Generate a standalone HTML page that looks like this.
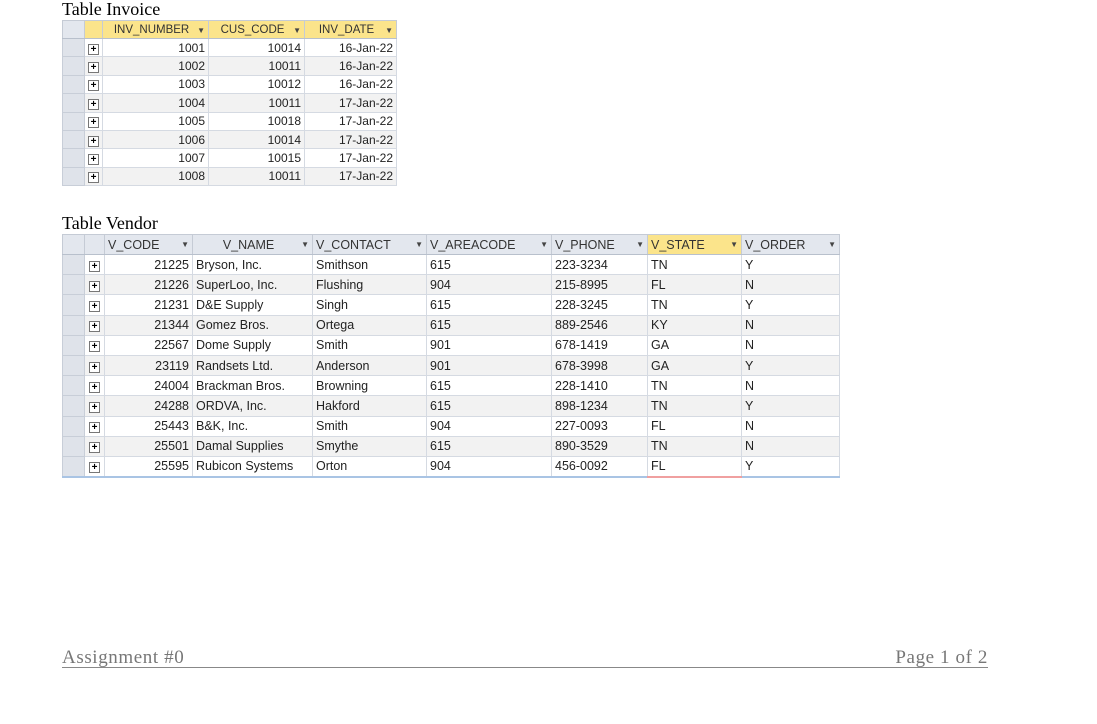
<!DOCTYPE html>
<html><head><meta charset="utf-8"><style>
body{margin:0;width:1097px;height:724px;background:#fff;position:relative;overflow:hidden;font-family:"Liberation Sans",sans-serif;}
.t{position:absolute;font-family:"Liberation Serif",serif;font-size:18px;color:#000;line-height:18px}
table{position:absolute;border-collapse:collapse;table-layout:fixed;font-size:12px;color:#222}
td{padding:0 3px;border:1px solid #d5dae2;white-space:nowrap;overflow:hidden}
tr.h td{background:#e3e7ee;border-color:#c5cbd5;color:#333;border-bottom:1px solid #b8c0cc}
tr.h td.y{background:#fbe48b}
td.s{background:#dfe3ea;border-color:#c8ced8;padding:0}
td.e{padding:0;text-align:center}
.p{display:inline-block;width:9px;height:9px;border:1px solid #777;background:#fff;font-size:10px;line-height:9px;text-align:center;color:#000;font-weight:bold}
tr.a td{background:#f2f2f2}
tr.a td.s{background:#dfe3ea}
.r{text-align:right}
.dd{float:right;font-size:8px;color:#444;margin-top:2px}
.ft{position:absolute;top:648px;font-family:"Liberation Serif",serif;font-size:19px;color:#777;line-height:20px}
</style></head><body>
<div class="t" style="left:62px;top:0">Table Invoice</div>
<table style="left:62px;top:20px;width:334px">
<col style="width:22px"><col style="width:18px"><col style="width:106px"><col style="width:96px"><col style="width:92px">
<tr class="h" style="height:18px;font-size:11.5px"><td class="s"></td><td class="y"></td><td class="y" style="text-align:center">INV_NUMBER <span class="dd">▼</span></td><td class="y" style="text-align:center">CUS_CODE <span class="dd">▼</span></td><td class="y" style="text-align:center">INV_DATE <span class="dd">▼</span></td></tr>
<tr style="height:18.4px"><td class="s"></td><td class="e"><span class="p">+</span></td><td class="r">1001</td><td class="r">10014</td><td class="r">16-Jan-22</td></tr>
<tr class="a" style="height:18.4px"><td class="s"></td><td class="e"><span class="p">+</span></td><td class="r">1002</td><td class="r">10011</td><td class="r">16-Jan-22</td></tr>
<tr style="height:18.4px"><td class="s"></td><td class="e"><span class="p">+</span></td><td class="r">1003</td><td class="r">10012</td><td class="r">16-Jan-22</td></tr>
<tr class="a" style="height:18.4px"><td class="s"></td><td class="e"><span class="p">+</span></td><td class="r">1004</td><td class="r">10011</td><td class="r">17-Jan-22</td></tr>
<tr style="height:18.4px"><td class="s"></td><td class="e"><span class="p">+</span></td><td class="r">1005</td><td class="r">10018</td><td class="r">17-Jan-22</td></tr>
<tr class="a" style="height:18.4px"><td class="s"></td><td class="e"><span class="p">+</span></td><td class="r">1006</td><td class="r">10014</td><td class="r">17-Jan-22</td></tr>
<tr style="height:18.4px"><td class="s"></td><td class="e"><span class="p">+</span></td><td class="r">1007</td><td class="r">10015</td><td class="r">17-Jan-22</td></tr>
<tr class="a" style="height:18.4px"><td class="s"></td><td class="e"><span class="p">+</span></td><td class="r">1008</td><td class="r">10011</td><td class="r">17-Jan-22</td></tr>
</table>

<div class="t" style="left:62px;top:214px">Table Vendor</div>
<table style="left:62px;top:234px;width:777px;font-size:12.5px">
<col style="width:22px"><col style="width:20px"><col style="width:88px"><col style="width:120px"><col style="width:114px"><col style="width:125px"><col style="width:96px"><col style="width:94px"><col style="width:98px">
<tr class="h" style="height:20px"><td class="s"></td><td></td><td>V_CODE <span class="dd">▼</span></td><td style="text-align:center">V_NAME <span class="dd">▼</span></td><td>V_CONTACT <span class="dd">▼</span></td><td>V_AREACODE <span class="dd">▼</span></td><td>V_PHONE <span class="dd">▼</span></td><td class="y">V_STATE <span class="dd">▼</span></td><td>V_ORDER <span class="dd">▼</span></td></tr>
<tr style="height:20.2px"><td class="s"></td><td class="e"><span class="p">+</span></td><td class="r">21225</td><td>Bryson, Inc.</td><td>Smithson</td><td>615</td><td>223-3234</td><td>TN</td><td>Y</td></tr>
<tr class="a" style="height:20.2px"><td class="s"></td><td class="e"><span class="p">+</span></td><td class="r">21226</td><td>SuperLoo, Inc.</td><td>Flushing</td><td>904</td><td>215-8995</td><td>FL</td><td>N</td></tr>
<tr style="height:20.2px"><td class="s"></td><td class="e"><span class="p">+</span></td><td class="r">21231</td><td>D&amp;E Supply</td><td>Singh</td><td>615</td><td>228-3245</td><td>TN</td><td>Y</td></tr>
<tr class="a" style="height:20.2px"><td class="s"></td><td class="e"><span class="p">+</span></td><td class="r">21344</td><td>Gomez Bros.</td><td>Ortega</td><td>615</td><td>889-2546</td><td>KY</td><td>N</td></tr>
<tr style="height:20.2px"><td class="s"></td><td class="e"><span class="p">+</span></td><td class="r">22567</td><td>Dome Supply</td><td>Smith</td><td>901</td><td>678-1419</td><td>GA</td><td>N</td></tr>
<tr class="a" style="height:20.2px"><td class="s"></td><td class="e"><span class="p">+</span></td><td class="r">23119</td><td>Randsets Ltd.</td><td>Anderson</td><td>901</td><td>678-3998</td><td>GA</td><td>Y</td></tr>
<tr style="height:20.2px"><td class="s"></td><td class="e"><span class="p">+</span></td><td class="r">24004</td><td>Brackman Bros.</td><td>Browning</td><td>615</td><td>228-1410</td><td>TN</td><td>N</td></tr>
<tr class="a" style="height:20.2px"><td class="s"></td><td class="e"><span class="p">+</span></td><td class="r">24288</td><td>ORDVA, Inc.</td><td>Hakford</td><td>615</td><td>898-1234</td><td>TN</td><td>Y</td></tr>
<tr style="height:20.2px"><td class="s"></td><td class="e"><span class="p">+</span></td><td class="r">25443</td><td>B&amp;K, Inc.</td><td>Smith</td><td>904</td><td>227-0093</td><td>FL</td><td>N</td></tr>
<tr class="a" style="height:20.2px"><td class="s"></td><td class="e"><span class="p">+</span></td><td class="r">25501</td><td>Damal Supplies</td><td>Smythe</td><td>615</td><td>890-3529</td><td>TN</td><td>N</td></tr>
<tr style="height:20.2px;border-bottom:2px solid #a9c4e4"><td class="s"></td><td class="e"><span class="p">+</span></td><td class="r">25595</td><td>Rubicon Systems</td><td>Orton</td><td>904</td><td>456-0092</td><td style="border-bottom:2px solid #f0a0a0">FL</td><td>Y</td></tr>
</table>

<div class="ft" style="left:62px;letter-spacing:0.6px">Assignment #0</div>
<div class="ft" style="right:109px;letter-spacing:0.6px">Page 1 of 2</div>
<div style="position:absolute;left:62px;top:667px;width:926px;height:1px;background:#888"></div>
</body></html>
